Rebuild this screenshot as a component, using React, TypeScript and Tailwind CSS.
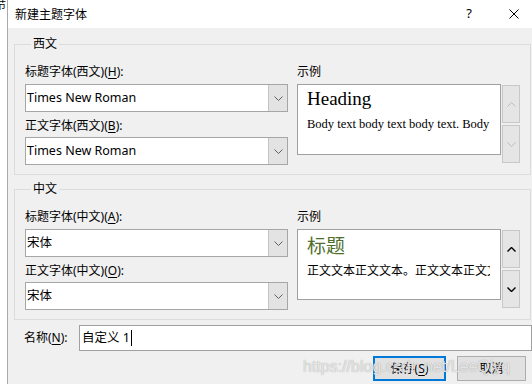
import React from "react";

type ChevronProps = {
  up?: boolean;
  color?: string;
  width?: number;
};

const Chevron: React.FC<ChevronProps> = ({ up, color = "#606060", width = 1 }) => (
  <svg width="9" height="5" viewBox="0 0 9 5">
    <path
      d={up ? "M0.5 4.5 L4.5 0.5 L8.5 4.5" : "M0.5 0.5 L4.5 4.5 L8.5 0.5"}
      fill="none"
      stroke={color}
      strokeWidth={width}
    />
  </svg>
);

// label with an underlined access key, e.g. 标题字体(西文)(H):
const Label: React.FC<{ text: string; hotkey: string; className?: string }> = ({ text, hotkey, className }) => (
  <div className={`h-[16px] text-[12px] leading-[16px] text-black ${className ?? ""}`}>
    {text}(<span className="underline underline-offset-2">{hotkey}</span>):
  </div>
);

const Combo: React.FC<{ value: string }> = ({ value }) => (
  <div className="flex h-[28px] w-[263px] border border-[#a6a6a6] bg-white">
    <div className="flex flex-1 items-center pl-[1px] text-[12.5px] text-black">{value}</div>
    <div className="flex w-[19px] items-center justify-center border-l border-[#c4c4c4] bg-[#e3e3e3]">
      <Chevron />
    </div>
  </div>
);

type PreviewProps = {
  heading: React.ReactNode;
  body: React.ReactNode;
  enabled?: boolean;
};

const Preview: React.FC<PreviewProps> = ({ heading, body, enabled }) => (
  <div className="ml-[9px] flex flex-col">
    <div className="h-[16px] text-[12px] leading-[16px] text-black">示例</div>
    <div className="mt-[4px] flex">
      <div className="h-[71px] w-[204px] border border-[#a0a0a0] bg-white pl-[9px] pt-[3px]">
        <div className="w-[183px] overflow-hidden">
          {heading}
          <div className="whitespace-nowrap">{body}</div>
        </div>
      </div>
      <div className="ml-[1px] mt-[1px] flex w-[18px] flex-col gap-[2px]">
        <div className="flex h-[38px] items-center justify-center border border-[#c8c8c8] bg-[#e5e5e5]">
          <Chevron up color={enabled ? "#000000" : "#bcbcbc"} width={enabled ? 1.4 : 1} />
        </div>
        <div className="flex h-[38px] items-center justify-center border border-[#c8c8c8] bg-[#e5e5e5]">
          <Chevron color={enabled ? "#000000" : "#bcbcbc"} width={enabled ? 1.4 : 1} />
        </div>
      </div>
    </div>
  </div>
);

type GroupProps = {
  title: string;
  labels: [string, string, string, string];
  fonts: [string, string];
  preview: React.ReactNode;
  className?: string;
};

const Group: React.FC<GroupProps> = ({ title, labels, fonts, preview, className }) => (
  <fieldset className={`w-[517px] border border-[#dcdcdc] pb-[9px] pl-[10px] pt-[12px] ${className ?? ""}`}>
    <legend className="ml-[6px] px-[2px] text-[12px] leading-[16px] text-black">{title}</legend>
    <div className="flex">
      <div className="flex w-[263px] flex-col">
        <Label text={labels[0]} hotkey={labels[1]} />
        <div className="mt-[4px]">
          <Combo value={fonts[0]} />
        </div>
        <Label text={labels[2]} hotkey={labels[3]} className="mt-[6px]" />
        <div className="mt-[3px]">
          <Combo value={fonts[1]} />
        </div>
      </div>
      {preview}
    </div>
  </fieldset>
);

export default function App() {
  return (
    <div className="relative flex h-[384px] w-[532px] overflow-hidden bg-white font-['Noto_Sans','Noto_Sans_CJK_SC',sans-serif]">
      {/* strip of the window behind */}
      <div className="w-[7px] overflow-hidden text-[10px] leading-[10px] text-black">
        <span className="-ml-[4px] block">节</span>
      </div>

      <div className="flex flex-1 flex-col border-l border-[#a9a9a9]">
        {/* title bar */}
        <div className="flex h-[28px] items-center bg-white pl-[7px] text-[12px] text-black">
          <span className="font-['Noto_Sans_CJK_SC',sans-serif]">新建主题字体</span>
          <span className="ml-auto text-[13px]">?</span>
          <span className="ml-[37px] mr-[13px] flex w-[10px] items-center justify-center">
            <svg width="10" height="10" viewBox="0 0 10 10">
              <path d="M0.5 0.5 L9.5 9.5 M9.5 0.5 L0.5 9.5" stroke="#000" strokeWidth="1" />
            </svg>
          </span>
        </div>

        {/* body */}
        <div className="flex flex-1 flex-col bg-[#f0f0f0] pl-[6px] pt-[8px]">
          <Group
            title="西文"
            labels={["标题字体(西文)", "H", "正文字体(西文)", "B"]}
            fonts={["Times New Roman", "Times New Roman"]}
            preview={
              <Preview
                heading={<div className="font-['Liberation_Serif',serif] text-[19px] leading-[22px] text-black">Heading</div>}
                body={<span className="font-['Liberation_Serif',serif] text-[12.5px] leading-[16px] text-black">Body text body text body text. Body text</span>}
              />
            }
          />

          <Group
            className="mt-[6px]"
            title="中文"
            labels={["标题字体(中文)", "A", "正文字体(中文)", "O"]}
            fonts={["宋体", "宋体"]}
            preview={
              <Preview
                enabled
                heading={<div className="font-['Noto_Sans_CJK_SC',serif] text-[19px] leading-[24px] text-[#4f6f2c]">标题</div>}
                body={<span className="font-['Noto_Sans_CJK_SC',serif] text-[12px] leading-[16px] text-black">正文文本正文文本。正文文本正文文本。</span>}
              />
            }
          />

          {/* name row */}
          <div className="mt-[5px] flex items-center">
            <div className="w-[65px] pl-[10px] text-[12px] text-black">
              名称(<span className="underline underline-offset-2">N</span>):
            </div>
            <div className="flex h-[26px] flex-1 items-center border border-[#a0a0a0] bg-white pl-[2px] text-[12.5px] text-black">
              <span>自定义 1</span>
              <span className="ml-[1px] h-[16px] w-[1px] bg-black" />
            </div>
          </div>

          {/* buttons */}
          <div className="mt-[5px] flex justify-end pr-[6px]">
            <button className="flex h-[25px] w-[73px] items-center justify-center border-2 border-[#0078d7] bg-[#e1e1e1] text-[12px] text-black">
              保存(<span className="underline underline-offset-2">S</span>)
            </button>
            <button className="ml-[11px] flex h-[25px] w-[69px] items-center justify-center border border-[#adadad] bg-[#e1e1e1] text-[12px] text-black">
              取消
            </button>
          </div>
        </div>
      </div>

      {/* blog watermark */}
      <div className="pointer-events-none absolute left-[303px] top-[355px] font-['Liberation_Sans',sans-serif] text-[16px] text-white/75 [text-shadow:0_0_1px_#8a8a8a]">
        https://blog.csdn.net/LeeQiyq
      </div>
    </div>
  );
}
